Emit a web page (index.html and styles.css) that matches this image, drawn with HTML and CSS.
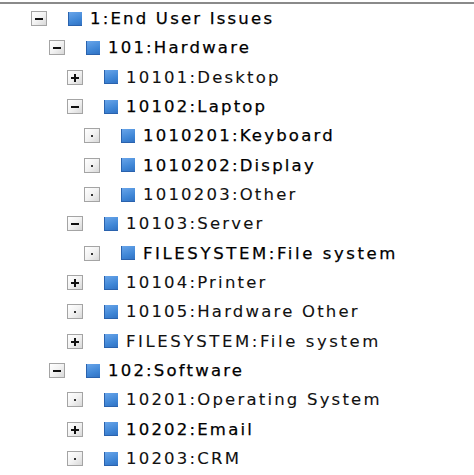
FILE: index.html
```html
<!DOCTYPE html>
<html>
<head>
<meta charset="utf-8">
<link rel="stylesheet" href="styles.css">
</head>
<body>
<div class="tree">
  <div class="row l0"><span class="tg minus"></span><span class="ic"></span><span class="tx b">1:End User Issues</span></div>
  <div class="row l1"><span class="tg minus"></span><span class="ic"></span><span class="tx b">101:Hardware</span></div>
  <div class="row l2"><span class="tg plus"></span><span class="ic"></span><span class="tx">10101:Desktop</span></div>
  <div class="row l2"><span class="tg minus"></span><span class="ic"></span><span class="tx b">10102:Laptop</span></div>
  <div class="row l3"><span class="tg dot"></span><span class="ic"></span><span class="tx b">1010201:Keyboard</span></div>
  <div class="row l3"><span class="tg dot"></span><span class="ic"></span><span class="tx b">1010202:Display</span></div>
  <div class="row l3"><span class="tg dot"></span><span class="ic"></span><span class="tx">1010203:Other</span></div>
  <div class="row l2"><span class="tg minus"></span><span class="ic"></span><span class="tx">10103:Server</span></div>
  <div class="row l3"><span class="tg dot"></span><span class="ic"></span><span class="tx b caps">FILESYSTEM:File system</span></div>
  <div class="row l2"><span class="tg plus"></span><span class="ic"></span><span class="tx">10104:Printer</span></div>
  <div class="row l2"><span class="tg dot"></span><span class="ic"></span><span class="tx">10105:Hardware Other</span></div>
  <div class="row l2"><span class="tg plus"></span><span class="ic"></span><span class="tx caps">FILESYSTEM:File system</span></div>
  <div class="row l1"><span class="tg minus"></span><span class="ic"></span><span class="tx b">102:Software</span></div>
  <div class="row l2"><span class="tg dot"></span><span class="ic"></span><span class="tx">10201:Operating System</span></div>
  <div class="row l2"><span class="tg plus"></span><span class="ic"></span><span class="tx b">10202:Email</span></div>
  <div class="row l2"><span class="tg dot"></span><span class="ic"></span><span class="tx">10203:CRM</span></div>
</div>
</body>
</html>
```

FILE: styles.css
```css
html, body {
  margin: 0;
  padding: 0;
  background: #fff;
}
.tree {
  margin-top: 2px;
  border-top: 2px solid #8a8a8a;
  padding-top: 0;
  font-family: "DejaVu Sans", sans-serif;
  font-size: 16.5px;
  letter-spacing: 2.2px;
  color: #111;
}
.row {
  display: flex;
  align-items: center;
  height: 29.33px;
}
.l0 { padding-left: 31px; }
.l1 { padding-left: 49px; }
.l2 { padding-left: 67px; }
.l3 { padding-left: 84px; }
.tg {
  position: relative;
  width: 14px;
  height: 13px;
  border: 1px solid #a4a4a4;
  background: linear-gradient(135deg, #ffffff 0%, #f2f2f2 50%, #d8d8d8 100%);
  flex: none;
  box-sizing: content-box;
}
.tg.minus::before, .tg.plus::before {
  content: "";
  position: absolute;
  left: 3px;
  top: 6px;
  width: 8px;
  height: 2px;
  background: #111;
}
.tg.plus::after {
  content: "";
  position: absolute;
  left: 6px;
  top: 3px;
  width: 2px;
  height: 8px;
  background: #111;
}
.tg.dot::before {
  content: "";
  position: absolute;
  left: 6px;
  top: 6px;
  width: 2px;
  height: 2px;
  background: #333;
}
.ic {
  width: 14px;
  height: 14px;
  margin-left: 21px;
  flex: none;
  background: linear-gradient(160deg, #6aa6ea 0%, #3f86d6 60%, #2f6fc0 100%);
  box-shadow: inset 1px -1px 0 #2a62ad;
}
.tx {
  margin-left: 8px;
  white-space: nowrap;
  -webkit-text-stroke: 0.1px #111;
}
.tx.b {
  color: #000;
  -webkit-text-stroke: 0.25px #000;
}
.tx.caps {
  letter-spacing: 2.6px;
}
```
